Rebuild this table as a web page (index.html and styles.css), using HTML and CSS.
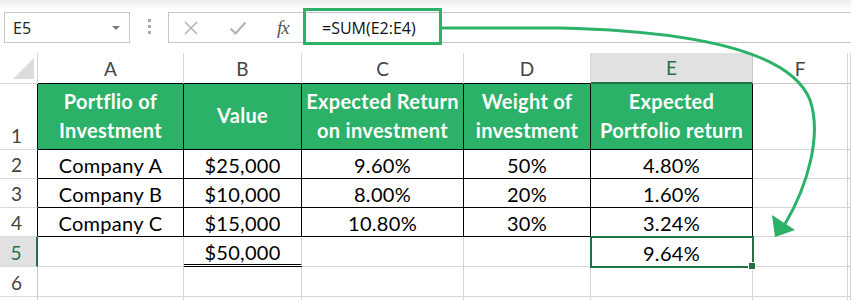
FILE: index.html
```html
<!DOCTYPE html>
<html lang="en">
<head>
    <meta charset="UTF-8">
    <meta name="viewport" content="width=device-width, initial-scale=1.0">
    <title>Portfolio Return</title>
    <link rel="stylesheet" href="styles.css">
</head>
<body>
    <div class="toolbar">
        <div class="namebox">
            <span>E5</span>
            <span class="caret"></span>
        </div>
        <div class="grip"><i></i><i></i><i></i></div>
        <div class="formula">
            <span class="icon">
                <svg width="16" height="16" viewBox="0 0 16 16"><path d="M2 2 L14 14 M14 2 L2 14" stroke="#b4b4b4" stroke-width="1.6" fill="none"/></svg>
            </span>
            <span class="icon">
                <svg width="18" height="16" viewBox="0 0 18 16"><path d="M1.5 8.5 L6.5 13.5 L16.5 2.5" stroke="#b4b4b4" stroke-width="2.2" fill="none"/></svg>
            </span>
            <span class="icon fx">fx</span>
            <span class="input">=SUM(E2:E4)</span>
        </div>
    </div>

    <div class="sheet">
        <!-- column headers -->
        <div class="corner"></div>
        <div class="col-head top">A</div>
        <div class="col-head top">B</div>
        <div class="col-head top">C</div>
        <div class="col-head top">D</div>
        <div class="col-head sel">E</div>
        <div class="col-head">F</div>
        <div class="col-head"></div>

        <!-- row 1 -->
        <div class="row-head edge">1</div>
        <div class="cell hd">Portflio of<br>Investment</div>
        <div class="cell hd">Value</div>
        <div class="cell hd">Expected Return<br>on investment</div>
        <div class="cell hd">Weight of<br>investment</div>
        <div class="cell hd">Expected<br>Portfolio return</div>
        <div class="cell"></div>
        <div class="cell"></div>

        <!-- row 2 -->
        <div class="row-head edge">2</div>
        <div class="cell tb">Company A</div>
        <div class="cell tb">$25,000</div>
        <div class="cell tb">9.60%</div>
        <div class="cell tb">50%</div>
        <div class="cell tb">4.80%</div>
        <div class="cell"></div>
        <div class="cell"></div>

        <!-- row 3 -->
        <div class="row-head edge">3</div>
        <div class="cell tb">Company B</div>
        <div class="cell tb">$10,000</div>
        <div class="cell tb">8.00%</div>
        <div class="cell tb">20%</div>
        <div class="cell tb">1.60%</div>
        <div class="cell"></div>
        <div class="cell"></div>

        <!-- row 4 -->
        <div class="row-head edge">4</div>
        <div class="cell tb">Company C</div>
        <div class="cell tb">$15,000</div>
        <div class="cell tb">10.80%</div>
        <div class="cell tb">30%</div>
        <div class="cell tb">3.24%</div>
        <div class="cell"></div>
        <div class="cell"></div>

        <!-- row 5 -->
        <div class="row-head sel">5</div>
        <div class="cell"></div>
        <div class="cell total">$50,000</div>
        <div class="cell"></div>
        <div class="cell"></div>
        <div class="cell active">9.64%</div>
        <div class="cell"></div>
        <div class="cell"></div>

        <!-- row 6 -->
        <div class="row-head">6</div>
        <div class="cell"></div>
        <div class="cell"></div>
        <div class="cell"></div>
        <div class="cell"></div>
        <div class="cell"></div>
        <div class="cell"></div>
        <div class="cell"></div>

        <!-- row 7 (cut off) -->
        <div class="row-head"></div>
        <div class="cell"></div>
        <div class="cell"></div>
        <div class="cell"></div>
        <div class="cell"></div>
        <div class="cell"></div>
        <div class="cell"></div>
        <div class="cell"></div>
    </div>

    <!-- callout: formula box and arrow to the result -->
    <svg class="callout" width="851" height="300" viewBox="0 0 851 300">
        <rect x="304.5" y="9.5" width="136" height="34" fill="none" stroke="#2bb168" stroke-width="3"/>
        <path d="M442 28 L560 28 C690 31 790 50 810 100 C822 135 808 185 785 224" fill="none" stroke="#2bb168" stroke-width="3"/>
        <polygon points="775,237 772,215 795,230" fill="#2bb168"/>
    </svg>
</body>
</html>
```

FILE: styles.css
```css
body {
    margin: 0;
    width: 851px;
    height: 300px;
    overflow: hidden;
    position: relative;
    background: #fff;
    font-family: Lato, "Liberation Sans", sans-serif;
}
.toolbar {
    display: flex;
    align-items: flex-start;
    height: 53px;
    padding: 12px 0 0 4px;
    box-sizing: border-box;
    background: linear-gradient(#ececec, #fff 9px);
}
.namebox {
    width: 126px;
    height: 31px;
    box-sizing: border-box;
    border: 1px solid #c6c6c6;
    background: #fff;
    display: flex;
    align-items: center;
    justify-content: space-between;
    padding: 0 9px 0 8px;
    font-family: "Open Sans", sans-serif;
    font-size: 16px;
    color: #222;
}
.caret {
    width: 0;
    height: 0;
    border-left: 4px solid transparent;
    border-right: 4px solid transparent;
    border-top: 4px solid #7a7a7a;
}
.grip {
    width: 38px;
    display: flex;
    flex-direction: column;
    align-items: center;
    gap: 3px;
    padding-top: 7px;
}
.grip i {
    width: 3px;
    height: 3px;
    background: #a9a9a9;
}
.formula {
    flex: 1;
    height: 31px;
    box-sizing: border-box;
    border: 1px solid #c6c6c6;
    border-right: none;
    background: #fff;
    display: flex;
    align-items: center;
    padding-left: 14px;
}
.icon {
    width: 46px;
    display: flex;
    align-items: center;
}
.fx {
    font-family: "Liberation Serif", serif;
    font-style: italic;
    font-size: 19px;
    letter-spacing: -1px;
    color: #555;
    width: 45px;
    padding-left: 2px;
    box-sizing: border-box;
}
.input {
    padding-left: 2px;
    font-family: "Open Sans", sans-serif;
    font-size: 16px;
    color: #111;
}

.sheet {
    display: grid;
    grid-template-columns: 38px 146px 118px 162px 127px 162px 95px 3px;
    grid-template-rows: 31px 66px 29px 29px 29px 30px 30px 10px;
}
.sheet > div {
    box-sizing: border-box;
    border-right: 1px solid #d4d4d4;
    border-bottom: 1px solid #d4d4d4;
    display: flex;
    align-items: center;
    justify-content: center;
    font-size: 20px;
    letter-spacing: 0.3px;
    color: #000;
}
.corner {
    position: relative;
}
.corner::after {
    content: "";
    position: absolute;
    left: 13px;
    top: 5px;
    width: 21px;
    height: 21px;
    background: #dcdcdc;
    clip-path: polygon(100% 0, 100% 100%, 0 100%);
}
.sheet > .col-head {
    font-size: 19px;
    letter-spacing: 0;
    color: #444;
    border-right-color: #dadada;
    border-bottom-color: #c6c6c6;
}
.sheet > .col-head.top {
    border-bottom-color: #000;
}
.sheet > .col-head.sel {
    background: #e1e1e1;
    color: #217346;
    border-right-color: #c6c6c6;
    border-bottom: 2px solid #217346;
}
.sheet > .row-head {
    font-size: 19px;
    letter-spacing: 0;
    color: #444;
    align-items: flex-end;
    padding-bottom: 2px;
    padding-right: 4px;
    border-right-color: #c6c6c6;
    border-bottom-color: #dadada;
}
.sheet > .row-head.edge {
    border-right-color: #000;
}
.sheet > .row-head.sel {
    background: #e1e1e1;
    color: #217346;
    border-right: 2px solid #217346;
}
.sheet > .hd {
    background: #2bb168;
    color: #fff;
    font-weight: bold;
    text-align: center;
    line-height: 29px;
    border-right-color: #000;
    border-bottom-color: #000;
    padding-bottom: 2px;
}
.sheet > .tb {
    border-right-color: #000;
    border-bottom-color: #000;
    padding-top: 2px;
}
.sheet > .total {
    border-bottom: 3px double #000;
    padding-top: 2px;
}
.sheet > .active {
    position: relative;
    outline: 2px solid #217346;
    outline-offset: -1px;
    padding-top: 2px;
}
.active::after {
    content: "";
    position: absolute;
    right: -4px;
    bottom: -4px;
    width: 6px;
    height: 6px;
    background: #217346;
    border: 1px solid #fff;
}
.callout {
    position: absolute;
    top: 0;
    left: 0;
    pointer-events: none;
}
```
